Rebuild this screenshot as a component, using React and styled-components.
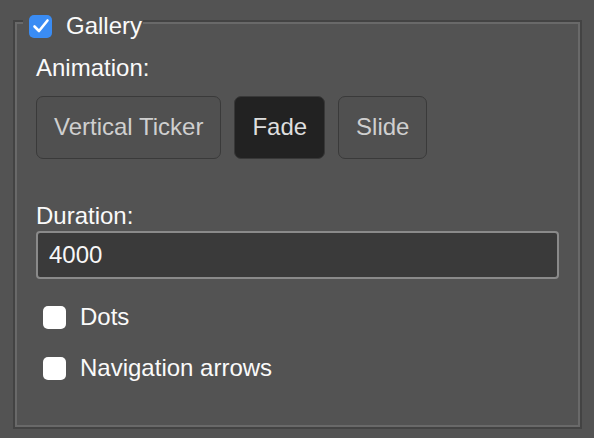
import React, { useState } from "react";
import styled, { createGlobalStyle } from "styled-components";

const GlobalStyle = createGlobalStyle`
  html, body {
    margin: 0;
    padding: 0;
    background: #535353;
  }
  body {
    font-family: "Liberation Sans", Arial, sans-serif;
    font-size: 24px;
    line-height: 28px;
    color: #f7f7f7;
  }
`;

const Page = styled.div`
  padding: 2px 12px 0 13px;
`;

const Group = styled.fieldset`
  margin: 0;
  min-width: 0;
  padding: 0 21px 45px 21px;
  border: 2px solid #434343;
  box-shadow: inset 0 0 0 2px #696969;
`;

const Legend = styled.legend`
  display: flex;
  align-items: center;
  gap: 14px;
  margin-left: -13px;
  padding: 10px 1px 0 6px;
  background: #535353;
  color: #fafafa;
`;

const Box = styled.span`
  display: inline-flex;
  align-items: center;
  justify-content: center;
  flex: none;
  width: ${(p) => p.$size}px;
  height: ${(p) => p.$size}px;
  border-radius: 5px;
  background: ${(p) => (p.$checked ? "#3a8cf4" : "#ffffff")};
`;

const Label = styled.div`
  margin-top: 14px;
  color: #fafafa;
`;

const Buttons = styled.div`
  display: flex;
  gap: 13px;
  margin-top: 14px;
`;

const Choice = styled.button`
  font: inherit;
  line-height: 28px;
  padding: 16px 17px 17px;
  border-radius: 7px;
  border: 1px solid ${(p) => (p.$active ? "#383838" : "#3a3a3a")};
  background: ${(p) => (p.$active ? "#222222" : "#505050")};
  color: ${(p) => (p.$active ? "#dedede" : "#cfcfcf")};
  cursor: pointer;
`;

const Field = styled.label`
  display: block;
  margin-top: 43px;
  color: #fafafa;
`;

const Input = styled.input`
  display: block;
  box-sizing: border-box;
  width: 100%;
  height: 48px;
  margin-top: 1px;
  padding: 0 11px;
  font: inherit;
  color: #f7f7f7;
  background: #3a3a3a;
  border: 2px solid #8a8a8a;
  border-radius: 4px;
  outline: none;
`;

const Options = styled.div`
  display: flex;
  flex-direction: column;
  gap: 23px;
  margin-top: 24px;
  padding-left: 7px;
`;

const Option = styled.label`
  display: flex;
  align-items: center;
  gap: 14px;
  color: #fafafa;
  cursor: pointer;
`;

function Check({ checked, size = 23, onClick }) {
  return (
    <Box $checked={checked} $size={size} onClick={onClick}>
      {checked && (
        <svg width="18" height="18" viewBox="0 0 18 18" fill="none">
          <path
            d="M2.5 9.5 L7 14 L15.5 3.5"
            stroke="#ffffff"
            strokeWidth="2.6"
            strokeLinecap="round"
            strokeLinejoin="round"
          />
        </svg>
      )}
    </Box>
  );
}

const animations = ["Vertical Ticker", "Fade", "Slide"];

export default function App() {
  const [gallery, setGallery] = useState(true);
  const [animation, setAnimation] = useState("Fade");
  const [duration, setDuration] = useState("4000");
  const [dots, setDots] = useState(false);
  const [arrows, setArrows] = useState(false);

  return (
    <Page>
      <GlobalStyle />
      <Group>
        <Legend>
          <Check checked={gallery} size={23} onClick={() => setGallery(!gallery)} />
          Gallery
        </Legend>
        <Label>Animation:</Label>
        <Buttons>
          {animations.map((a) => (
            <Choice key={a} $active={a === animation} onClick={() => setAnimation(a)}>
              {a}
            </Choice>
          ))}
        </Buttons>
        <Field>
          Duration:
          <Input value={duration} onChange={(e) => setDuration(e.target.value)} />
        </Field>
        <Options>
          <Option onClick={() => setDots(!dots)}>
            <Check checked={dots} />
            Dots
          </Option>
          <Option onClick={() => setArrows(!arrows)}>
            <Check checked={arrows} />
            Navigation arrows
          </Option>
        </Options>
      </Group>
    </Page>
  );
}
